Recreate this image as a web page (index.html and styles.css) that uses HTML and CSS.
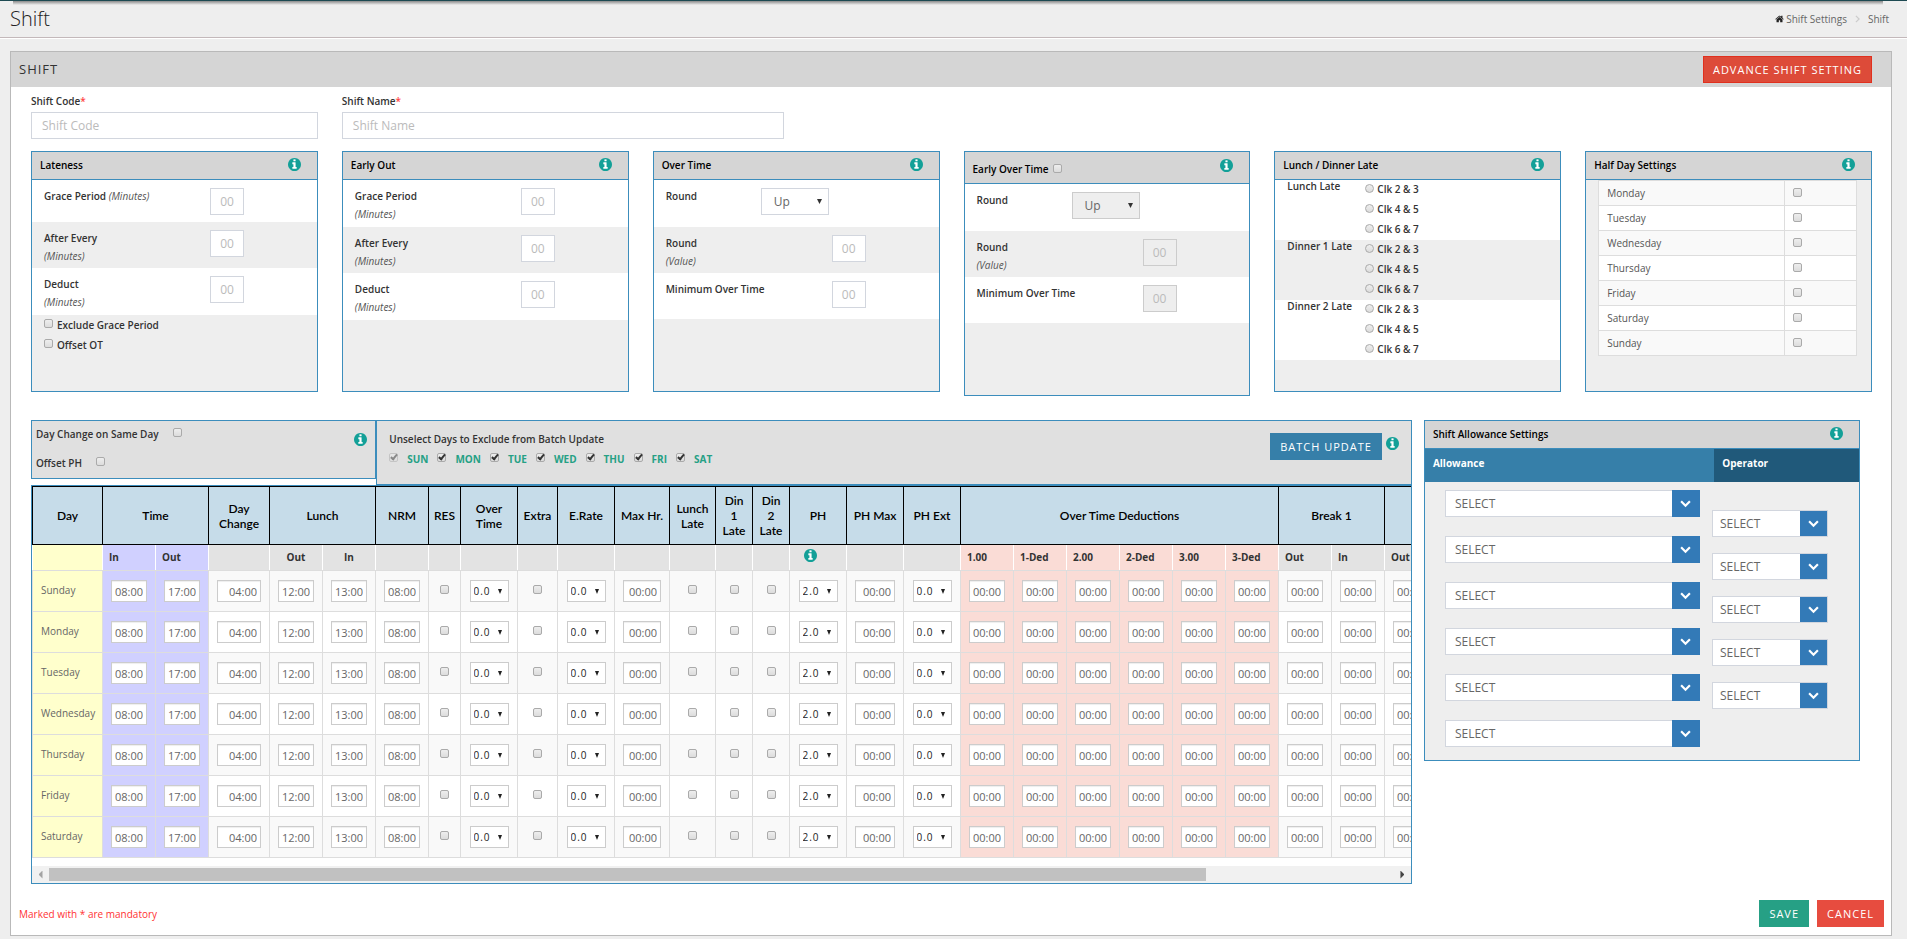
FILE: index.html
```html
<!DOCTYPE html>
<html lang="en">
<head>
  <meta charset="UTF-8">
  <meta name="viewport" content="width=device-width, initial-scale=1">
  <title>Shift</title>
  <link rel="stylesheet" href="styles.css">
</head>
<body>
  <svg class="sprite" aria-hidden="true">
    <symbol id="info" viewBox="128 128 1536 1536">
      <circle cx="896" cy="896" r="600" fill="#fff"/>
      <path d="M1152 1376v-160q0-14-9-23t-23-9h-96v-512q0-14-9-23t-23-9h-320q-14 0-23 9t-9 23v160q0 14 9 23t23 9h96v320h-96q-14 0-23 9t-9 23v160q0 14 9 23t23 9h448q14 0 23-9t9-23zM1024 480v-160q0-14-9-23t-23-9h-192q-14 0-23 9t-9 23v160q0 14 9 23t23 9h192q14 0 23-9t9-23zM1664 896q0 209-103 385.5t-279.5 279.5-385.5 103-385.5-103-279.5-279.5-103-385.5 103-385.5 279.5-279.5 385.5-103 385.5 103 279.5 279.5 103 385.5z"/>
    </symbol>
    <symbol id="home" viewBox="64 128 1664 1536">
      <path d="M1472 992v480q0 26-19 45t-45 19h-384v-384h-256v384h-384q-26 0-45-19t-19-45v-480q0-1 .5-3t.5-3l575-474 575 474q1 2 1 6zm223-69l-62 74q-8 9-21 11h-3q-13 0-21-7l-692-577-692 577q-12 8-24 7-13-2-21-11l-62-74q-8-10-7-23.5t11-21.5l719-599q32-26 76-26t76 26l244 204v-195q0-14 9-23t23-9h192q14 0 23 9t9 23v408l219 182q10 8 11 21.5t-7 23.5z"/>
    </symbol>
    <symbol id="down" viewBox="0 0 10 8">
      <path d="M1 2l4 4 4-4" fill="none" stroke="#fff" stroke-width="2"/>
    </symbol>
  </svg>

  <header class="page-title">
    <h1>Shift</h1>
    <nav class="breadcrumb">
      <a href="#"><svg class="home"><use href="#home"/></svg> Shift Settings</a>
      <svg class="sep" viewBox="0 0 6 10"><path d="M1 1l4 4-4 4" fill="none" stroke="#ccc" stroke-width="1.5"/></svg>
      <span>Shift</span>
    </nav>
  </header>

  <main class="panel">
    <div class="panel-head">
      <h2>SHIFT</h2>
      <button class="btn btn-danger" type="button">ADVANCE SHIFT SETTING</button>
    </div>

    <form class="panel-body">
      <div class="names">
        <div class="field">
          <label for="code">Shift Code<span class="req">*</span></label>
          <input type="text" id="code" placeholder="Shift Code">
        </div>
        <div class="field wide">
          <label for="name">Shift Name<span class="req">*</span></label>
          <input type="text" id="name" placeholder="Shift Name">
        </div>
      </div>

      <div class="cards">
        <section class="card">
          <div class="card-head"><h3>Lateness</h3><svg class="info"><use href="#info"/></svg></div>
          <div class="card-body">
            <div class="setting"><label for="l1">Grace Period <em>(Minutes)</em></label><input type="text" id="l1" placeholder="00"></div>
            <div class="setting alt"><label for="l2">After Every<br><em>(Minutes)</em></label><input type="text" id="l2" placeholder="00"></div>
            <div class="setting"><label for="l3">Deduct<br><em>(Minutes)</em></label><input type="text" id="l3" placeholder="00"></div>
            <label class="option"><input type="checkbox"> Exclude Grace Period</label>
            <label class="option"><input type="checkbox"> Offset OT</label>
          </div>
        </section>

        <section class="card">
          <div class="card-head"><h3>Early Out</h3><svg class="info"><use href="#info"/></svg></div>
          <div class="card-body">
            <div class="setting"><label for="e1">Grace Period<br><em>(Minutes)</em></label><input type="text" id="e1" placeholder="00"></div>
            <div class="setting alt"><label for="e2">After Every<br><em>(Minutes)</em></label><input type="text" id="e2" placeholder="00"></div>
            <div class="setting"><label for="e3">Deduct<br><em>(Minutes)</em></label><input type="text" id="e3" placeholder="00"></div>
          </div>
        </section>

        <section class="card">
          <div class="card-head"><h3>Over Time</h3><svg class="info"><use href="#info"/></svg></div>
          <div class="card-body">
            <div class="setting round"><label for="o1">Round</label><select id="o1"><option>Up</option><option>Down</option></select></div>
            <div class="setting alt"><label for="o2">Round<br><em>(Value)</em></label><input type="text" id="o2" placeholder="00"></div>
            <div class="setting"><label for="o3">Minimum Over Time</label><input type="text" id="o3" placeholder="00"></div>
          </div>
        </section>

        <section class="card">
          <div class="card-head tall">
            <h3><label>Early Over Time <input type="checkbox"></label></h3>
            <svg class="info"><use href="#info"/></svg>
          </div>
          <div class="card-body">
            <div class="setting round"><label for="x1">Round</label><select id="x1" disabled><option>Up</option><option>Down</option></select></div>
            <div class="setting alt"><label for="x2">Round<br><em>(Value)</em></label><input type="text" id="x2" placeholder="00" disabled></div>
            <div class="setting"><label for="x3">Minimum Over Time</label><input type="text" id="x3" placeholder="00" disabled></div>
          </div>
        </section>

        <section class="card">
          <div class="card-head"><h3>Lunch / Dinner Late</h3><svg class="info"><use href="#info"/></svg></div>
          <div class="card-body">
            <fieldset class="late">
              <legend>Lunch Late</legend>
              <label><input type="radio" name="lunch"> Clk 2 &amp; 3</label>
              <label><input type="radio" name="lunch"> Clk 4 &amp; 5</label>
              <label><input type="radio" name="lunch"> Clk 6 &amp; 7</label>
            </fieldset>
            <fieldset class="late alt">
              <legend>Dinner 1 Late</legend>
              <label><input type="radio" name="dinner1"> Clk 2 &amp; 3</label>
              <label><input type="radio" name="dinner1"> Clk 4 &amp; 5</label>
              <label><input type="radio" name="dinner1"> Clk 6 &amp; 7</label>
            </fieldset>
            <fieldset class="late">
              <legend>Dinner 2 Late</legend>
              <label><input type="radio" name="dinner2"> Clk 2 &amp; 3</label>
              <label><input type="radio" name="dinner2"> Clk 4 &amp; 5</label>
              <label><input type="radio" name="dinner2"> Clk 6 &amp; 7</label>
            </fieldset>
          </div>
        </section>

        <section class="card">
          <div class="card-head"><h3>Half Day Settings</h3><svg class="info"><use href="#info"/></svg></div>
          <div class="card-body">
            <table class="half-day">
              <tr><td><label for="h1">Monday</label></td><td><input type="checkbox" id="h1"></td></tr>
              <tr><td><label for="h2">Tuesday</label></td><td><input type="checkbox" id="h2"></td></tr>
              <tr><td><label for="h3">Wednesday</label></td><td><input type="checkbox" id="h3"></td></tr>
              <tr><td><label for="h4">Thursday</label></td><td><input type="checkbox" id="h4"></td></tr>
              <tr><td><label for="h5">Friday</label></td><td><input type="checkbox" id="h5"></td></tr>
              <tr><td><label for="h6">Saturday</label></td><td><input type="checkbox" id="h6"></td></tr>
              <tr><td><label for="h7">Sunday</label></td><td><input type="checkbox" id="h7"></td></tr>
            </table>
          </div>
        </section>
      </div>

      <div class="lower">
        <div class="schedule">
          <div class="tools">
            <div class="same-day">
              <div>
                <label>Day Change on Same Day <input type="checkbox"></label>
                <label>Offset PH <input type="checkbox"></label>
              </div>
              <svg class="info"><use href="#info"/></svg>
            </div>
            <div class="batch">
              <div>
                <p>Unselect Days to Exclude from Batch Update</p>
                <div class="days">
                  <label><input type="checkbox" checked disabled>SUN</label>
                  <label><input type="checkbox" checked>MON</label>
                  <label><input type="checkbox" checked>TUE</label>
                  <label><input type="checkbox" checked>WED</label>
                  <label><input type="checkbox" checked>THU</label>
                  <label><input type="checkbox" checked>FRI</label>
                  <label><input type="checkbox" checked>SAT</label>
                </div>
              </div>
              <div class="batch-action">
                <button class="btn btn-primary" type="button">BATCH UPDATE</button>
                <svg class="info"><use href="#info"/></svg>
              </div>
            </div>
          </div>

          <div class="table-box">
            <div class="table-wrap" id="wrap">
              <table class="shift-table">
                <colgroup>
                  <col class="w70"><col class="w53" span="2"><col class="w61"><col class="w53" span="3"><col class="w32">
                  <col class="w57"><col class="w40"><col class="w57"><col class="w55"><col class="w46"><col class="w37" span="2">
                  <col class="w57" span="3"><col class="w53" span="10">
                </colgroup>
                <thead>
                  <tr>
                    <th>Day</th><th colspan="2">Time</th><th>Day Change</th><th colspan="2">Lunch</th><th>NRM</th><th>RES</th>
                    <th>Over Time</th><th>Extra</th><th>E.Rate</th><th>Max Hr.</th><th>Lunch Late</th><th>Din<br>1<br>Late</th><th>Din<br>2<br>Late</th>
                    <th>PH</th><th>PH Max</th><th>PH Ext</th><th colspan="6">Over Time Deductions</th>
                    <th colspan="2">Break 1</th><th colspan="2">Break 2</th>
                  </tr>
                  <tr class="sub">
                    <th class="day"></th><th class="time">In</th><th class="time">Out</th><th></th><th class="mid">Out</th><th class="mid">In</th>
                    <th></th><th></th><th></th><th></th><th></th><th></th><th></th><th></th><th></th>
                    <th class="ph"><svg class="info"><use href="#info"/></svg></th><th></th><th></th>
                    <th class="ded">1.00</th><th class="ded">1-Ded</th><th class="ded">2.00</th><th class="ded">2-Ded</th><th class="ded">3.00</th><th class="ded">3-Ded</th>
                    <th>Out</th><th>In</th><th>Out</th><th>In</th>
                  </tr>
                </thead>
                <tbody id="rows"></tbody>
              </table>
            </div>
            <div class="scrollbar">
              <button type="button" class="arrow left" id="left" aria-label="Scroll left"></button>
              <div class="track"><div class="thumb"></div></div>
              <button type="button" class="arrow right" id="right" aria-label="Scroll right"></button>
            </div>
          </div>
        </div>

        <section class="allowance">
          <div class="card-head"><h3>Shift Allowance Settings</h3><svg class="info"><use href="#info"/></svg></div>
          <div class="allow-head"><span>Allowance</span><span>Operator</span></div>
          <div class="allow-body">
            <div class="picks" id="allowances"></div>
            <div class="picks operators" id="operators"></div>
          </div>
        </section>
      </div>

      <footer class="panel-foot">
        <p>Marked with * are mandatory</p>
        <div>
          <button class="btn btn-save" type="button">SAVE</button>
          <button class="btn btn-cancel" type="button">CANCEL</button>
        </div>
      </footer>
    </form>
  </main>
  <script src="script.js"></script>
</body>
</html>
```

FILE: styles.css
```css
:root {
  --blue: #3c8dbc;
  --head: #d5d5d5;
  --grey: #eee;
  --text: #333;
  --muted: #666;
  --input-border: #d2d6de;
  --teal: #13a098;
}
*, *::before, *::after {
  box-sizing: border-box;
}
body {
  margin: 0;
  font-family: 'Open Sans', 'Noto Sans', sans-serif;
  font-size: 10px;
  line-height: 18px;
  color: var(--muted);
  background: var(--grey);
}
h1, h2, h3, p {
  margin: 0;
}
input, select, button {
  font-family: inherit;
  border-radius: 0;
}
a {
  color: inherit;
  text-decoration: none;
}
.sprite {
  position: absolute;
  width: 0;
  height: 0;
}
.info {
  flex: none;
  width: 13px;
  height: 13px;
  fill: var(--teal);
}

/* page title */
.page-title {
  display: flex;
  justify-content: space-between;
  align-items: center;
  height: 38px;
  padding: 0 18px 0 10px;
  border-top: 1px solid #1d4a52;
  border-bottom: 1px solid #c3b8ba;
  background: linear-gradient(#8a8a8a, var(--grey) 4px) no-repeat 13px 0 / calc(100% - 37px) 100%;
  box-shadow: 0 1px #fff;
}
.page-title h1 {
  font-size: 20px;
  font-weight: 300;
  color: #222;
}
.breadcrumb {
  display: flex;
  align-items: center;
  gap: 8px;
}
.home {
  width: 9px;
  height: 8px;
  fill: #222;
}
.sep {
  width: 5px;
  height: 8px;
}

/* main panel */
.panel {
  margin: 13px 15px 0 10px;
  border: 1px solid #b9b9b9;
  background: #fff;
  box-shadow: 0 14px 4px -12px #555;
}
.panel-head {
  display: flex;
  justify-content: space-between;
  align-items: center;
  height: 35px;
  padding: 0 19px 0 8px;
  background: var(--head);
}
.panel-head h2 {
  font-size: 13px;
  font-weight: 400;
  line-height: 16px;
  padding-bottom: 2px;
  letter-spacing: 1px;
  color: #333;
}
.btn {
  height: 27px;
  padding: 0 9px;
  font-size: 11px;
  line-height: 25px;
  font-weight: 500;
  letter-spacing: 1px;
  color: #fff;
  border: 1px solid transparent;
  cursor: pointer;
}
.btn-danger {
  background: #dd4b39;
  border-color: #e0301e;
}
.btn-primary {
  background: #367fa9;
}
.btn-save {
  background: #26a085;
}
.btn-cancel {
  background: #e74c3f;
}
.panel-body {
  padding: 5px 19px 0 20px;
}
label, legend, .batch p {
  font-weight: 600;
  color: var(--text);
}
.req {
  color: #f44;
}
input[type=text], select {
  height: 27px;
  font-size: 12px;
  color: var(--muted);
  border: 1px solid var(--input-border);
  background: #fff;
}
input::placeholder {
  color: #bbb;
}
input[type=text]:disabled, select:disabled {
  background: var(--grey);
  border-color: #ccc;
  opacity: 1;
}
select {
  appearance: none;
}
.names {
  display: grid;
  grid-template-columns: repeat(6, 1fr);
  gap: 24px;
}
.field.wide {
  grid-column: span 2;
}
.field label {
  display: block;
  padding-bottom: 2px;
}
.field input {
  display: block;
  width: 100%;
  padding: 0 10px;
}
.field.wide input {
  width: 74%;
}

/* ticks and radios */
input[type=checkbox], input[type=radio] {
  appearance: none;
  display: inline-block;
  flex: none;
  width: 9px;
  height: 9px;
  margin: 0;
  border: 1px solid #aaa;
  border-radius: 2px;
  background: linear-gradient(#eee, #dcdcdc);
}
input[type=radio] {
  border-radius: 50%;
}
input[type=checkbox]:checked::before {
  content: "";
  display: block;
  width: 4px;
  height: 7px;
  margin: -1px 0 0 2px;
  border: solid #333;
  border-width: 0 2px 2px 0;
  transform: rotate(40deg);
}
input[type=checkbox]:disabled {
  opacity: 0.5;
}

/* settings cards */
.cards {
  display: grid;
  grid-template-columns: repeat(6, 1fr);
  align-items: start;
  gap: 24px;
  margin-top: 12px;
}
.card {
  border: 1px solid var(--blue);
}
.card-head {
  display: flex;
  justify-content: space-between;
  align-items: center;
  height: 28px;
  padding: 0 16px 2px 8px;
  border-bottom: 1px solid var(--blue);
  background: var(--head);
}
.card-head.tall {
  height: 32px;
  align-items: flex-start;
  padding-top: 7px;
}
.card-head h3, .card-head label {
  font-size: 10px;
  font-weight: 600;
  color: #000;
}
.card-head.tall h3 {
  padding-top: 1px;
}
.card-head.tall input {
  margin-left: 2px;
}
.card-body {
  min-height: 211px;
  background: var(--grey);
}
.setting {
  display: flex;
  align-items: flex-start;
  padding: 7px 12px 0;
  background: #fff;
}
.setting.alt, .late.alt {
  background: var(--grey);
}
.setting label {
  width: 166px;
  padding-bottom: 4px;
}
.setting.alt label {
  padding-bottom: 3px;
}
.setting em {
  font-weight: 400;
  color: #555;
}
.setting input {
  width: 34px;
  margin: 1px 0 7px;
  padding: 0;
  text-align: center;
}
.setting select {
  width: 68px;
  margin: 1px 0 12px;
  padding: 0 12px;
  background: #fff url("data:image/svg+xml,%3Csvg xmlns='http://www.w3.org/2000/svg' width='5' height='5'%3E%3Cpath d='M0 0h5l-2.5 5z' fill='%23333'/%3E%3C/svg%3E") no-repeat right 6px top 10px;
}
.setting select:disabled {
  background-color: var(--grey);
}
.setting.round label {
  width: 95px;
}
.card .setting:last-child {
  min-height: 46px;
}
.option {
  display: flex;
  gap: 4px;
  height: 20px;
  padding-left: 12px;
  line-height: 20px;
}
.option input, .late input {
  margin-top: 4px;
}
.late {
  display: grid;
  grid-template-columns: 78px 1fr;
  margin: 0;
  padding: 0 12px;
  border: 0;
  background: #fff;
}
.late legend {
  float: left;
  padding: 0;
  line-height: 13px;
}
.late label {
  display: flex;
  grid-column: 2;
  gap: 3px;
  height: 20px;
  line-height: 18px;
}
.late legend + label {
  grid-row: 1;
}
.half-day {
  width: calc(100% - 26px);
  margin: 0 12px;
  border-collapse: collapse;
}
.half-day tr {
  background: #fff;
}
.half-day tr:nth-child(odd) {
  background: #f9f9f9;
}
.half-day td {
  height: 25px;
  padding: 0 8px 1px;
  border: 1px solid #ddd;
}
.half-day td:first-child {
  width: 72%;
}
.half-day label {
  font-weight: 400;
  color: #555;
}
.half-day input {
  display: block;
}

/* schedule */
.lower {
  display: grid;
  grid-template-columns: minmax(0, 19fr) minmax(0, 6fr);
  align-items: start;
  gap: 12px;
  margin-top: 24px;
  padding-right: 12px;
}
.tools {
  display: flex;
  align-items: flex-start;
}
.same-day, .batch {
  display: flex;
  justify-content: space-between;
  border: 1px solid var(--blue);
  background: #e0e0e0;
}
.same-day {
  width: 25%;
  height: 59px;
  padding: 4px 8px 0 4px;
}
.same-day label {
  display: flex;
  gap: 14px;
  margin-bottom: 11px;
}
.same-day input {
  margin-top: 3px;
}
.same-day .info {
  margin-top: 8px;
}
.batch {
  width: 75%;
  height: 65px;
  padding: 9px 12px 0;
}
.days {
  display: flex;
  gap: 9px;
  padding-top: 2px;
}
.days label {
  display: flex;
  align-items: flex-start;
  gap: 9px;
  font-weight: 700;
  color: #26a085;
}
.days input {
  margin-top: 3px;
}
.batch-action {
  display: flex;
  gap: 4px;
  padding-top: 3px;
}
.batch-action .info {
  margin-top: 4px;
}
.table-box {
  border: 1px solid var(--blue);
}
.table-wrap {
  overflow-x: auto;
  padding-bottom: 8px;
  scrollbar-width: none;
}
.scrollbar {
  display: flex;
  height: 17px;
  background: #f1f1f1;
}
.arrow {
  width: 17px;
  padding: 0;
  border: 0;
  background: none;
}
.arrow::before {
  content: "";
  display: block;
  width: 4px;
  height: 8px;
  margin: 0 auto;
  background: #444;
  clip-path: polygon(0 0, 100% 50%, 0 100%);
}
.arrow.left::before {
  background: #a3a3a3;
  clip-path: polygon(100% 0, 0 50%, 100% 100%);
}
.track {
  flex: 1;
  padding: 2px 0;
}
.thumb {
  width: 86%;
  height: 13px;
  background: #c1c1c1;
}
.shift-table {
  width: 1458px;
  table-layout: fixed;
  border-collapse: collapse;
}
.w32 { width: 32px; }
.w37 { width: 37px; }
.w40 { width: 40px; }
.w46 { width: 46px; }
.w53 { width: 53px; }
.w55 { width: 55px; }
.w57 { width: 57px; }
.w61 { width: 61px; }
.w70 { width: 70px; }
.shift-table thead th {
  height: 58px;
  padding: 0 4px;
  font-family: Lato, sans-serif;
  font-size: 12px;
  font-weight: 600;
  line-height: 15px;
  color: #000;
  border: 1px solid #000;
  background: #c6dce9;
}
.shift-table .sub th {
  height: 26px;
  padding: 0 6px;
  font-family: inherit;
  font-size: 10px;
  font-weight: 700;
  text-align: left;
  color: var(--text);
  border-color: #000 #fff #ddd;
  background: #e3e3e3;
}
.shift-table .sub .mid {
  text-align: center;
}
.shift-table .sub .ph {
  padding: 0 0 4px 14px;
}
.ph .info {
  display: block;
}
.shift-table td {
  height: 41px;
  padding: 0;
  text-align: center;
  border: 1px solid #ddd;
}
.shift-table tbody tr:nth-child(odd) {
  background: #f9f9f9;
}
.shift-table tbody th {
  padding: 0 8px 2px;
  font-weight: 400;
  text-align: left;
  border: 1px solid #ddd;
}
.shift-table .day, .shift-table .sub .day {
  background: #ffc;
}
.shift-table .time, .shift-table .sub .time {
  background: #d0d0ff;
}
.shift-table .ded, .shift-table .sub .ded {
  background: #fadcd6;
}
.shift-table input[type=text] {
  width: 36px;
  height: 22px;
  padding: 1px 3px 0 0;
  font-size: 11px;
  text-align: right;
  border-color: #ccc;
  box-shadow: inset 0 1px 1px #eee;
}
.shift-table .w44 input[type=text] {
  width: 44px;
}
.shift-table .w40 input[type=text] {
  width: 40px;
}
.shift-table .w38 input[type=text] {
  width: 38px;
}
.shift-table td.w38, .shift-table td.w40, .shift-table td.w44 {
  width: auto;
}
.shift-table td input, .shift-table td select {
  vertical-align: middle;
}
.shift-table td input[type=checkbox] {
  margin-bottom: 6px;
}
.shift-table td select {
  width: 39px;
  height: 22px;
  padding: 0 3px;
  font-size: 10px;
  letter-spacing: 1px;
  color: #222;
  border-color: #ccc;
  background: #fff url("data:image/svg+xml,%3Csvg xmlns='http://www.w3.org/2000/svg' width='4' height='5'%3E%3Cpath d='M0 0h4l-2 5z' fill='%23222'/%3E%3C/svg%3E") no-repeat right 6px center;
}

/* allowance */
.allowance {
  border: 1px solid var(--blue);
  background: var(--grey);
}
.allow-head {
  display: grid;
  grid-template-columns: 2fr 1fr;
  height: 33px;
  font-weight: 700;
  line-height: 29px;
  color: #fff;
}
.allow-head span {
  padding-left: 8px;
  background: #367fa9;
}
.allow-head span + span {
  background: #20597a;
}
.allow-body {
  display: grid;
  grid-template-columns: 255px 116px;
  gap: 12px;
  padding: 8px 20px 13px;
}
.picks {
  display: grid;
  align-content: start;
  gap: 19px;
}
.picks.operators {
  gap: 16px;
  padding-top: 20px;
}
.pick {
  display: flex;
}
.pick select {
  flex: 1;
  min-width: 0;
  padding: 0 9px;
  border-right: 0;
}
.operators select {
  padding: 0 7px;
}
.pick span {
  display: flex;
  align-items: center;
  justify-content: center;
  width: 28px;
  background: #337ab7;
}
.operators span {
  border: 1px solid var(--input-border);
  border-left: 0;
}
.pick svg {
  width: 11px;
  height: 9px;
}

/* footer */
.panel-foot {
  display: flex;
  justify-content: space-between;
  align-items: center;
  margin: 16px -12px 0;
  padding-bottom: 8px;
  color: #f33;
}
.panel-foot div {
  display: flex;
  gap: 8px;
}
```

FILE: script.js
```js
const days = ['Sunday', 'Monday', 'Tuesday', 'Wednesday', 'Thursday', 'Friday', 'Saturday'];

// [type, value, cell class, name]
const cells = [
  ['text', '08:00', 'time', 'Time in'],
  ['text', '17:00', 'time', 'Time out'],
  ['text', '04:00', 'w44', 'Day change'],
  ['text', '12:00', '', 'Lunch out'],
  ['text', '13:00', '', 'Lunch in'],
  ['text', '08:00', '', 'NRM'],
  ['check', '', '', 'RES'],
  ['select', '0.0', '', 'Over time'],
  ['check', '', '', 'Extra'],
  ['select', '0.0', '', 'E.Rate'],
  ['text', '00:00', 'w38', 'Max Hr.'],
  ['check', '', '', 'Lunch late'],
  ['check', '', '', 'Din 1 late'],
  ['check', '', '', 'Din 2 late'],
  ['select', '2.0', '', 'PH'],
  ['text', '00:00', 'w40', 'PH Max'],
  ['select', '0.0', '', 'PH Ext']
];
['1.00', '1-Ded', '2.00', '2-Ded', '3.00', '3-Ded'].forEach(n => cells.push(['text', '00:00', 'ded', n]));
[1, 2].forEach(n => {
  cells.push(['text', '00:00', '', 'Break ' + n + ' out']);
  cells.push(['text', '00:00', '', 'Break ' + n + ' in']);
});

function control(type, value, label) {
  if (type === 'check') return `<input type="checkbox" aria-label="${label}">`;
  if (type === 'select') return `<select aria-label="${label}"><option>${value}</option></select>`;
  return `<input type="text" value="${value}" aria-label="${label}">`;
}

document.getElementById('rows').innerHTML = days.map(day =>
  `<tr><th class="day">${day}</th>` +
  cells.map(([type, value, cls, name]) => `<td class="${cls}">${control(type, value, day + ' ' + name)}</td>`).join('') +
  '</tr>'
).join('');

function fillPicks(id, count, label) {
  let html = '';
  for (let i = 1; i <= count; i++) {
    html += `<div class="pick"><select aria-label="${label} ${i}"><option>SELECT</option></select><span><svg><use href="#down"/></svg></span></div>`;
  }
  document.getElementById(id).innerHTML = html;
}

fillPicks('allowances', 6, 'Allowance');
fillPicks('operators', 5, 'Operator');

const wrap = document.getElementById('wrap');
document.getElementById('left').addEventListener('click', () => wrap.scrollBy(-60, 0));
document.getElementById('right').addEventListener('click', () => wrap.scrollBy(60, 0));
```
